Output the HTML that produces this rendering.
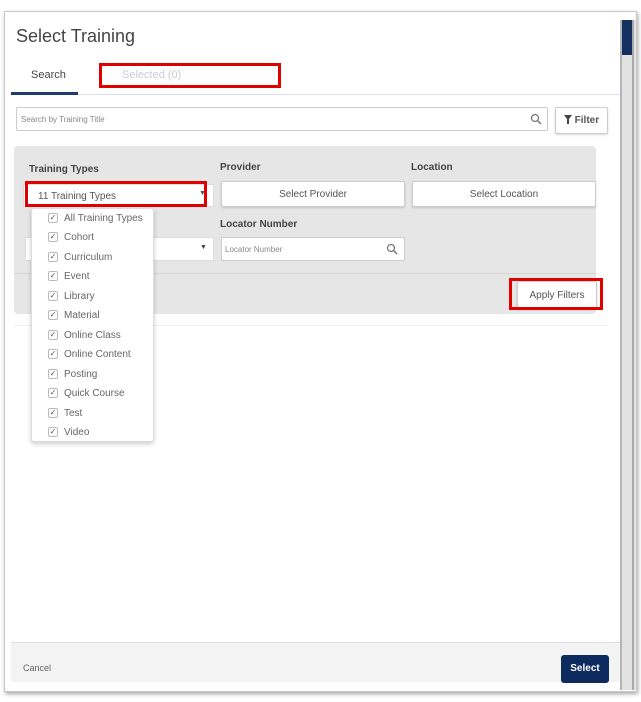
<!DOCTYPE html>
<html><head><meta charset="utf-8"><style>
*{box-sizing:border-box;margin:0;padding:0}
body{width:641px;height:702px;background:#fff;position:relative;overflow:hidden;font-family:"Liberation Sans",sans-serif;color:#555}
.a{position:absolute}
.outer{left:4px;top:11px;width:633px;height:681px;border:1px solid #c8c8c8;box-shadow:1px 2px 4px rgba(0,0,0,.35);background:#fff}
.strip{left:620px;top:20px;width:16px;height:670px;background:#e2e2e2;border-left:2px solid #b5b5b5}
.btn{background:#fff;border:1px solid #ccc;border-radius:2px;box-shadow:0 1px 2px rgba(0,0,0,.15);font-size:11px;color:#555;text-align:center}
.lbl{font-size:10px;font-weight:bold;color:#444}
.red{border:3px solid #e00000}
.item{position:absolute;left:16px;font-size:10px;color:#666;display:flex;align-items:center;height:12px}
.item span{display:inline-block;width:10px;height:10px;border:1px solid #bbb;border-radius:2px;margin-right:6px;font-size:8px;line-height:8px;text-align:center;color:#555}
</style></head><body>
<div class="a outer"></div>
<div class="a strip"></div>
<div class="a" style="left:622px;top:20px;width:10px;height:35px;background:#14305f"></div>
<div class="a" style="left:632px;top:20px;width:2px;height:670px;background:#a8a8a8"></div>
<div class="a" style="left:16px;top:26px;font-size:18px;color:#444">Select Training</div>
<div class="a" style="left:31px;top:69px;font-size:11px;color:#444">Search</div>
<div class="a" style="left:122px;top:69px;font-size:11px;color:#ccc">Selected (0)</div>
<div class="a" style="left:11px;top:94px;width:609px;height:1px;background:#dde"></div>
<div class="a" style="left:11px;top:92px;width:67px;height:3px;background:#1f3a6b"></div>
<div class="a red" style="left:99px;top:63px;width:182px;height:25px"></div>
<div class="a" style="left:16px;top:107px;width:532px;height:24px;border:1px solid #ccc;border-radius:2px;font-size:8px;color:#888;padding:7px 4px">Search by Training Title</div>
<svg class="a" style="left:530px;top:113px" width="12" height="12"><circle cx="5" cy="5" r="3.5" fill="none" stroke="#777" stroke-width="1.3"/><line x1="7.5" y1="7.5" x2="11" y2="11" stroke="#777" stroke-width="1.5"/></svg>
<div class="a btn" style="left:555px;top:107px;width:53px;height:27px;line-height:26px;font-size:10px;font-weight:bold;color:#555"><svg width="8" height="9" style="vertical-align:-1px"><path d="M0 0H8L5 4V9H3V4Z" fill="#444"/></svg> Filter</div>
<div class="a" style="left:14px;top:146px;width:582px;height:168px;background:#e6e6e6;border-radius:4px"></div>
<div class="a" style="left:14px;top:273px;width:582px;height:1px;background:#d6d6d6"></div>
<div class="a lbl" style="left:29px;top:164px">Training Types</div>
<div class="a lbl" style="left:220px;top:162px">Provider</div>
<div class="a lbl" style="left:411px;top:162px">Location</div>
<div class="a" style="left:23px;top:184px;width:191px;height:23px;background:#fff;border:1px solid #ddd;font-size:10px;color:#555;padding:6px 14px">11 Training Types</div>
<div class="a" style="left:199px;top:190px;font-size:7px;color:#555">&#9660;</div>
<div class="a red" style="left:25px;top:181px;width:182px;height:26px"></div>
<div class="a btn" style="left:221px;top:181px;width:184px;height:26px;line-height:25px;font-size:10px">Select Provider</div>
<div class="a btn" style="left:412px;top:181px;width:184px;height:26px;line-height:25px;font-size:10px">Select Location</div>
<div class="a lbl" style="left:220px;top:219px">Locator Number</div>
<div class="a" style="left:25px;top:237px;width:189px;height:24px;background:#fff;border:1px solid #ddd"></div>
<div class="a" style="left:200px;top:244px;font-size:7px;color:#444">&#9660;</div>
<div class="a" style="left:221px;top:237px;width:184px;height:24px;background:#fff;border:1px solid #ccc;font-size:8px;color:#888;padding:7px 3px">Locator Number</div>
<svg class="a" style="left:386px;top:243px" width="12" height="12"><circle cx="5" cy="5" r="3.5" fill="none" stroke="#777" stroke-width="1.3"/><line x1="7.5" y1="7.5" x2="11" y2="11" stroke="#777" stroke-width="1.5"/></svg>
<div class="a btn" style="left:517px;top:281px;width:80px;height:28px;line-height:27px;font-size:10px">Apply Filters</div>
<div class="a red" style="left:509px;top:278px;width:94px;height:32px"></div>
<div class="a" style="left:14px;top:325px;width:594px;height:1px;background:#eee"></div>
<div class="a" style="left:31px;top:208px;width:123px;height:234px;background:#fff;border:1px solid #ddd;border-radius:3px;box-shadow:0 2px 5px rgba(0,0,0,.2)">
<div class="item" style="top:3px"><span>&#10003;</span>All Training Types</div>
<div class="item" style="top:22px"><span>&#10003;</span>Cohort</div>
<div class="item" style="top:42px"><span>&#10003;</span>Curriculum</div>
<div class="item" style="top:61px"><span>&#10003;</span>Event</div>
<div class="item" style="top:81px"><span>&#10003;</span>Library</div>
<div class="item" style="top:100px"><span>&#10003;</span>Material</div>
<div class="item" style="top:120px"><span>&#10003;</span>Online Class</div>
<div class="item" style="top:139px"><span>&#10003;</span>Online Content</div>
<div class="item" style="top:159px"><span>&#10003;</span>Posting</div>
<div class="item" style="top:178px"><span>&#10003;</span>Quick Course</div>
<div class="item" style="top:198px"><span>&#10003;</span>Test</div>
<div class="item" style="top:217px"><span>&#10003;</span>Video</div>
</div>
<div class="a" style="left:11px;top:642px;width:609px;height:40px;background:#f3f3f3;border-top:1px solid #ddd"></div>
<div class="a" style="left:23px;top:663px;font-size:9px;color:#666">Cancel</div>
<div class="a" style="left:561px;top:655px;width:48px;height:28px;background:#0d2b5e;border-radius:3px;color:#fff;font-size:10px;font-weight:bold;text-align:center;line-height:28px">Select</div>
</body></html>
